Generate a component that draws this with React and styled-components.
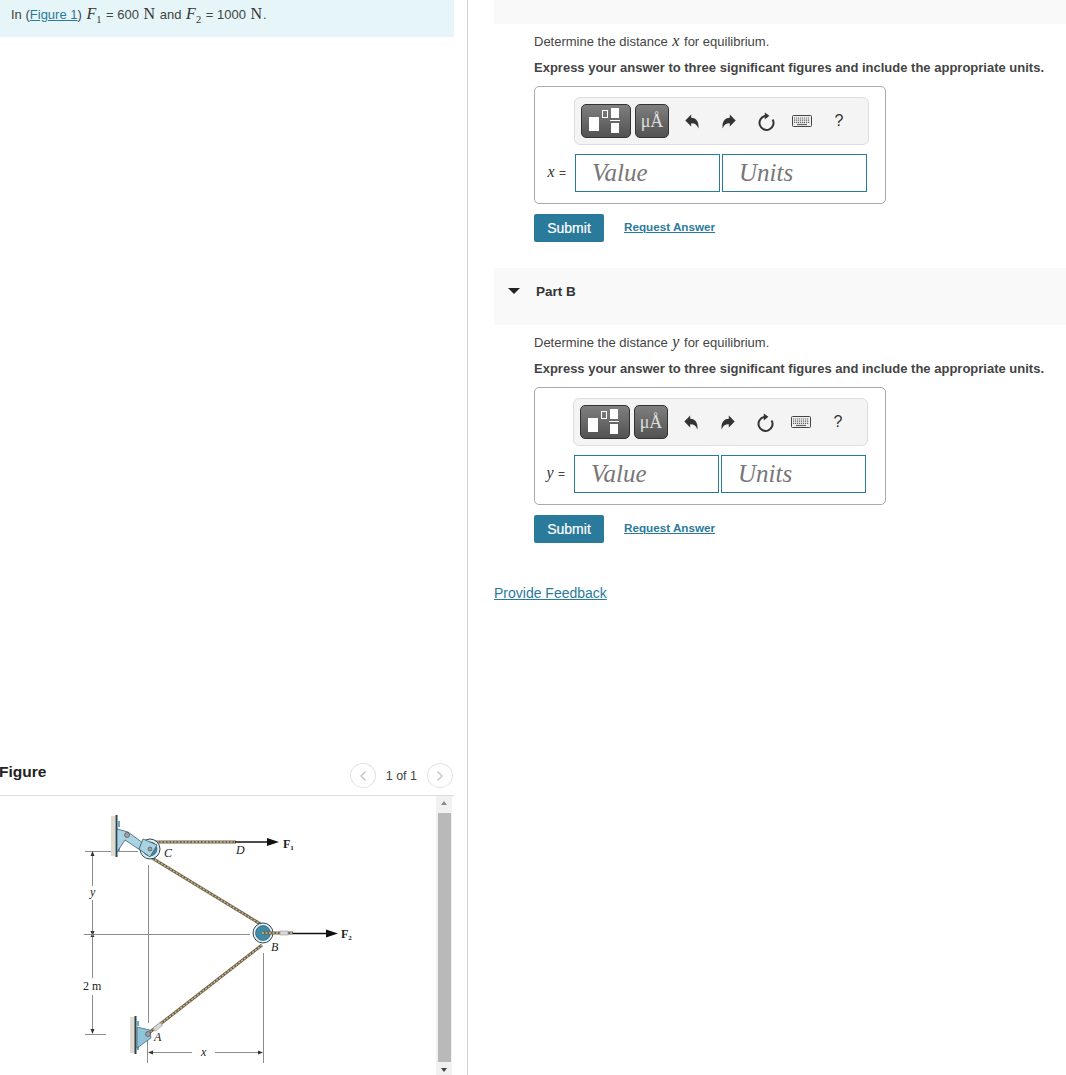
import React from "react";
import styled, { createGlobalStyle } from "styled-components";
import { ChevronLeft, ChevronRight } from "lucide-react";

const GlobalStyle = createGlobalStyle`
  html, body {
    margin: 0;
    padding: 0;
    background: #ffffff;
    font-family: "Liberation Sans", Arial, sans-serif;
    color: #333333;
  }
`;

const Page = styled.div`
  width: 1066px;
  height: 1075px;
  display: flex;
  overflow: hidden;
`;

const LeftColumn = styled.div`
  width: 454px;
  padding-right: 13px;
  flex-shrink: 0;
  display: flex;
  flex-direction: column;
  justify-content: space-between;
  border-right: 1px solid #ccd3df;
`;

const Banner = styled.div`
  height: 37px;
  box-sizing: border-box;
  padding: 6px 0 0 11px;
  background: #e6f5f7;
  font-size: 13px;
  line-height: 18px;
  color: #444444;
  white-space: nowrap;
`;

const Link = styled.a`
  color: #2a7a9b;
  text-decoration: underline;
  font-size: ${(p) => p.$size || "inherit"};
  font-weight: ${(p) => (p.$bold ? 700 : 400)};
`;

const MathVar = styled.i`
  font-family: "Liberation Serif", "Times New Roman", serif;
  font-size: 16px;
  line-height: 0;
  color: #333333;
  margin: 0 1px;
  sub {
    font-size: 10.5px;
    font-style: normal;
    line-height: 0;
  }
`;

const Unit = styled.span`
  font-family: "Liberation Serif", "Times New Roman", serif;
  font-size: 16px;
  line-height: 0;
  color: #333333;
  margin: 0 1px;
`;

const FigurePanel = styled.section`
  display: flex;
  flex-direction: column;
`;

const FigureHeader = styled.header`
  height: 36px;
  display: flex;
  align-items: center;
  justify-content: space-between;
  box-sizing: border-box;
  padding: 3px 1px 0 0;
  border-bottom: 1px solid #dddddd;
`;

const FigureTitle = styled.h2`
  margin: 0 0 15px -1px;
  font-size: 15.5px;
  font-weight: 700;
  color: #222222;
`;

const Pager = styled.div`
  display: flex;
  align-items: center;
  gap: 10px;
  margin-bottom: 7px;
  font-size: 12.5px;
  color: #444444;
`;

const PagerButton = styled.span`
  width: 26px;
  height: 25px;
  box-sizing: border-box;
  border: 1px solid #e2e2e2;
  border-radius: 50%;
  display: flex;
  align-items: center;
  justify-content: center;
  color: #c4c4c4;
`;

const FigureBody = styled.div`
  display: flex;
  height: 279px;
`;

const Drawing = styled.svg`
  width: 436px;
  height: 279px;
  flex-shrink: 0;
  display: block;
`;

const Scrollbar = styled.div`
  width: 16px;
  background: #f1f1f1;
  display: flex;
  flex-direction: column;
  align-items: center;
`;

const ScrollArrow = styled.span`
  width: 0;
  height: 0;
  margin: ${(p) => (p.$down ? "6px 0 0" : "5px 0 8px")};
  border-left: 3px solid transparent;
  border-right: 3px solid transparent;
  ${(p) => (p.$down ? "border-top: 4px solid #444444;" : "border-bottom: 4px solid #8a8a8a;")}
`;

const ScrollThumb = styled.div`
  width: 13px;
  height: 249px;
  background: #b9b9b9;
`;

const RightColumn = styled.div`
  flex: 1;
  margin-left: 26px;
  display: flex;
  flex-direction: column;
`;

const PartBar = styled.div`
  height: ${(p) => p.$height}px;
  flex-shrink: 0;
  display: flex;
  align-items: center;
  gap: 16px;
  box-sizing: border-box;
  padding: 0 0 11px 14px;
  background: #f9f9f9;
`;

const Caret = styled.span`
  width: 0;
  height: 0;
  border-left: 6px solid transparent;
  border-right: 6px solid transparent;
  border-top: 6px solid #222222;
`;

const PartTitle = styled.span`
  font-size: 13.5px;
  font-weight: 700;
  color: #333333;
`;

const PartBody = styled.div`
  padding-left: 40px;
  margin-bottom: ${(p) => p.$after}px;
`;

const Prompt = styled.p`
  margin: 0;
  padding-top: 9px;
  font-size: 13px;
  line-height: 18px;
  color: #444444;
`;

const Instruction = styled.p`
  margin: 8px 0 9px;
  font-size: 13px;
  line-height: 18px;
  font-weight: 700;
  color: #444444;
  white-space: nowrap;
`;

const AnswerBox = styled.div`
  width: 352px;
  height: 118px;
  box-sizing: border-box;
  padding: 10px 0 0;
  border: 1px solid #aaaaaa;
  border-radius: 5px;
`;

const Toolbar = styled.div`
  width: 295px;
  height: 48px;
  box-sizing: border-box;
  margin-left: ${(p) => p.$indent - 1}px;
  padding: 6px 0 0 6px;
  display: flex;
  align-items: flex-start;
  background: #f4f4f4;
  border: 1px solid #dddddd;
  border-radius: 6px;
`;

const TemplateButton = styled.span`
  width: ${(p) => p.$width}px;
  height: 34px;
  box-sizing: border-box;
  margin-right: 4px;
  flex-shrink: 0;
  display: flex;
  align-items: center;
  justify-content: center;
  border: 1px solid #333333;
  border-radius: 5px;
  background: linear-gradient(#7f7f7f, #525252);
  color: #dddddd;
  font-family: "Liberation Serif", "Times New Roman", serif;
  font-size: 18px;
`;

const ToolSlot = styled.span`
  width: ${(p) => p.$width}px;
  height: 34px;
  flex-shrink: 0;
  display: flex;
  align-items: center;
  justify-content: center;
  color: #333333;
  font-size: 16px;
`;

const AnswerRow = styled.div`
  margin-top: 9px;
  display: flex;
  align-items: center;
  gap: 2px;
`;

const AnswerLabel = styled.span`
  width: ${(p) => p.$indent - 2}px;
  box-sizing: border-box;
  padding-right: 7px;
  text-align: right;
  font-size: 12px;
  color: #444444;
  flex-shrink: 0;
  white-space: nowrap;
`;

const AnswerField = styled.div`
  width: 145px;
  height: 38px;
  box-sizing: border-box;
  padding-left: ${(p) => p.$pad}px;
  display: flex;
  align-items: center;
  border: 1px solid #2a7a9b;
  font-family: "Liberation Serif", "Times New Roman", serif;
  font-style: italic;
  font-size: 25px;
  color: #777777;
`;

const Actions = styled.div`
  margin-top: 10px;
  display: flex;
  align-items: center;
  gap: 20px;
`;

const SubmitButton = styled.button`
  width: 70px;
  height: 28px;
  padding: 0;
  border: none;
  border-radius: 2px;
  background: #2a7a9b;
  color: #ffffff;
  font-family: "Liberation Sans", Arial, sans-serif;
  font-size: 14px;
  font-weight: 400;
  -webkit-text-stroke: 0.2px #ffffff;
`;

const RequestLink = styled(Link)`
  font-size: 11.7px;
  font-weight: 700;
  margin-top: -4px;
`;

const Feedback = styled.div`
  font-size: 14px;
`;

const TemplateIcon = () => (
  <svg width="48" height="32" viewBox="1 1 48 32">
    <rect x="8" y="13" width="10" height="14" fill="#fff" />
    <rect x="21.5" y="6.5" width="5" height="7" fill="none" stroke="#fff" />
    <rect x="30" y="4" width="8" height="10" fill="#fff" />
    <rect x="29" y="16" width="10" height="1" fill="#fff" />
    <rect x="30" y="19" width="8" height="10" fill="#fff" />
  </svg>
);

const ArrowIcon = ({ flip }) => (
  <svg width="14" height="15" viewBox="0 0 14 15" style={flip ? { transform: "scaleX(-1)" } : undefined}>
    <path d="M0.3 6.4 L6.2 0.6 V3.8 C11 4 14.2 7.4 13.4 14.6 C12.2 11 10.2 9.2 6.2 9.2 V12.4 Z" fill="#333" />
  </svg>
);

const ResetIcon = () => (
  <svg width="18" height="20" viewBox="0 0 18 20">
    <path d="M15.6 8.4 A7 7 0 1 1 8.2 5" fill="none" stroke="#333" strokeWidth="2" />
    <path d="M7.8 1.4 L12.4 4.8 L7.8 8.4 Z" fill="#333" />
  </svg>
);

const KeyboardIcon = () => (
  <svg width="20" height="12" viewBox="0 0 20 12">
    <rect x="0.5" y="0.5" width="19" height="11" rx="1" fill="#eeeeee" stroke="#444" />
    <path d="M2 3H18M2 5.2H18M2 7.4H18" stroke="#666" strokeWidth="1.2" strokeDasharray="1.2 0.8" />
    <path d="M5 9.5H15" stroke="#666" strokeWidth="1.2" />
  </svg>
);

const AnswerWidget = ({ symbol, indent }) => (
  <AnswerBox>
    <Toolbar $indent={indent}>
      <TemplateButton $width={50}><TemplateIcon /></TemplateButton>
      <TemplateButton $width={34}>μÅ</TemplateButton>
      <ToolSlot $width={37}><ArrowIcon /></ToolSlot>
      <ToolSlot $width={38}><ArrowIcon flip /></ToolSlot>
      <ToolSlot $width={35}><ResetIcon /></ToolSlot>
      <ToolSlot $width={37}><KeyboardIcon /></ToolSlot>
      <ToolSlot $width={38}>?</ToolSlot>
    </Toolbar>
    <AnswerRow>
      <AnswerLabel $indent={indent}><MathVar>{symbol}</MathVar> =</AnswerLabel>
      <AnswerField $pad={16}>Value</AnswerField>
      <AnswerField $pad={16}>Units</AnswerField>
    </AnswerRow>
  </AnswerBox>
);

const Rope = ({ d }) => (
  <>
    <path d={d} fill="none" stroke="#6f6148" strokeWidth="3" />
    <path d={d} fill="none" stroke="#c8b898" strokeWidth="1.4" strokeDasharray="2 1.5" />
  </>
);

const dims = { stroke: "#8c8c8c", strokeWidth: 1, fill: "none" };
const label = { fontFamily: "Liberation Serif, serif", fontSize: 12, fill: "#222" };

const Mechanism = () => (
  <Drawing viewBox="0 796 436 279">
    {/* dimension lines */}
    <path d="M85 851.5H112M120 851.5H138M84 934.5H250M148.5 865V1023M263.5 953V1063M147.5 1040V1063M85 1034.5H106" {...dims} />
    <path d="M92.5 853V886M92.5 900V934M92.5 936V978M92.5 995V1033M150 1052.5H192M215 1052.5H262" {...dims} />
    <path d="M90.5 856L92.5 851L94.5 856ZM90.5 931L92.5 936L94.5 931ZM90.5 937L92.5 933L94.5 937ZM90.5 1029L92.5 1034L94.5 1029ZM153 1050.5L148 1052.5L153 1054.5ZM258 1050.5L263 1052.5L258 1054.5Z" fill="#333" />

    {/* ropes */}
    <Rope d="M150 842H236" />
    <Rope d="M152 858L262 925" />
    <Rope d="M150 1032L262 945" />

    {/* wall at C */}
    <rect x="111" y="816" width="4" height="40" fill="#e0dbcf" />
    <rect x="115.5" y="815" width="2" height="42" fill="#33434c" />
    <rect x="117" y="821" width="3" height="6" fill="#6fa8bf" />
    <rect x="117" y="846" width="3" height="6" fill="#6fa8bf" />
    <path d="M117 829L128 832L143 843L140 850L125 840L117 852Z" fill="#a9d3e3" stroke="#2f4a57" strokeWidth="0.7" />
    <circle cx="127" cy="835" r="2.5" fill="#a0a0a0" stroke="#444" strokeWidth="0.6" />
    <circle cx="150" cy="849" r="10" fill="#d9eef5" stroke="#2f4a57" />
    <circle cx="150" cy="849" r="7" fill="#3f8ba8" stroke="#2f4a57" strokeWidth="0.6" />
    <path d="M143 839L157 845L150 857L139 849Z" fill="#a9d3e3" stroke="#2f4a57" strokeWidth="0.7" />
    <circle cx="150" cy="849" r="2" fill="#a0a0a0" stroke="#444" strokeWidth="0.6" />

    {/* pulley at B */}
    <circle cx="263" cy="933" r="10" fill="#e4f2f7" stroke="#2f4a57" />
    <circle cx="263" cy="933" r="7.5" fill="#3f8ba8" stroke="#2f4a57" strokeWidth="0.6" />
    <Rope d="M262 933H293" />
    <rect x="280" y="931" width="8" height="4" fill="#d8d8d8" stroke="#888" strokeWidth="0.5" />

    {/* wall at A */}
    <rect x="130" y="1017" width="5" height="36" fill="#e0dbcf" />
    <rect x="134.5" y="1016" width="2" height="38" fill="#33434c" />
    <rect x="136" y="1021" width="3" height="5" fill="#6fa8bf" />
    <rect x="136" y="1045" width="3" height="5" fill="#6fa8bf" />
    <path d="M137 1027L150 1030L151 1038L137 1048Z" fill="#8fc3d9" stroke="#2f4a57" strokeWidth="0.6" />
    <circle cx="148" cy="1034" r="2.5" fill="#a0a0a0" stroke="#444" strokeWidth="0.6" />
    <path d="M153 1028L160 1022.5L162.5 1025.5L155.5 1031Z" fill="#d8d8d8" stroke="#888" strokeWidth="0.5" />

    {/* force arrows */}
    <path d="M235 842H270" stroke="#111" strokeWidth="1.5" />
    <path d="M267 838L279 842L267 846Z" fill="#111" />
    <path d="M293 933.5H330" stroke="#111" strokeWidth="1.5" />
    <path d="M326 929.5L338 933.5L326 937.5Z" fill="#111" />

    {/* labels */}
    <text x="283" y="848" {...label} fontWeight="700">F<tspan fontSize="7" dy="2">1</tspan></text>
    <text x="341" y="938" {...label} fontWeight="700">F<tspan fontSize="7" dy="2">2</tspan></text>
    <text x="236" y="854" {...label} fontStyle="italic">D</text>
    <text x="164" y="857" {...label} fontStyle="italic">C</text>
    <text x="271" y="951" {...label} fontStyle="italic">B</text>
    <text x="154" y="1041" {...label} fontStyle="italic">A</text>
    <text x="90" y="896" {...label} fontStyle="italic">y</text>
    <text x="201" y="1056" {...label} fontStyle="italic">x</text>
    <text x="83" y="990" {...label}>2 m</text>
  </Drawing>
);

export default function App() {
  return (
    <Page>
      <GlobalStyle />
      <LeftColumn>
        <Banner>
          In (<Link href="#">Figure 1</Link>) <MathVar>F<sub>1</sub></MathVar> = 600 <Unit>N</Unit> and <MathVar>F<sub>2</sub></MathVar> = 1000 <Unit>N</Unit>.
        </Banner>
        <FigurePanel>
          <FigureHeader>
            <FigureTitle>Figure</FigureTitle>
            <Pager>
              <PagerButton><ChevronLeft size={16} /></PagerButton>
              <span>1 of 1</span>
              <PagerButton><ChevronRight size={16} /></PagerButton>
            </Pager>
          </FigureHeader>
          <FigureBody>
            <Mechanism />
            <Scrollbar>
              <ScrollArrow />
              <ScrollThumb />
              <ScrollArrow $down />
            </Scrollbar>
          </FigureBody>
        </FigurePanel>
      </LeftColumn>
      <RightColumn>
        <PartBar $height={24} />
        <PartBody $after={26}>
          <Prompt>Determine the distance <MathVar>x</MathVar> for equilibrium.</Prompt>
          <Instruction>Express your answer to three significant figures and include the appropriate units.</Instruction>
          <AnswerWidget symbol="x" indent={40} />
          <Actions>
            <SubmitButton>Submit</SubmitButton>
            <RequestLink href="#">Request Answer</RequestLink>
          </Actions>
        </PartBody>
        <PartBar $height={57}>
          <Caret />
          <PartTitle>Part B</PartTitle>
        </PartBar>
        <PartBody $after={42}>
          <Prompt>Determine the distance <MathVar>y</MathVar> for equilibrium.</Prompt>
          <Instruction>Express your answer to three significant figures and include the appropriate units.</Instruction>
          <AnswerWidget symbol="y" indent={39} />
          <Actions>
            <SubmitButton>Submit</SubmitButton>
            <RequestLink href="#">Request Answer</RequestLink>
          </Actions>
        </PartBody>
        <Feedback><Link href="#">Provide Feedback</Link></Feedback>
      </RightColumn>
    </Page>
  );
}
